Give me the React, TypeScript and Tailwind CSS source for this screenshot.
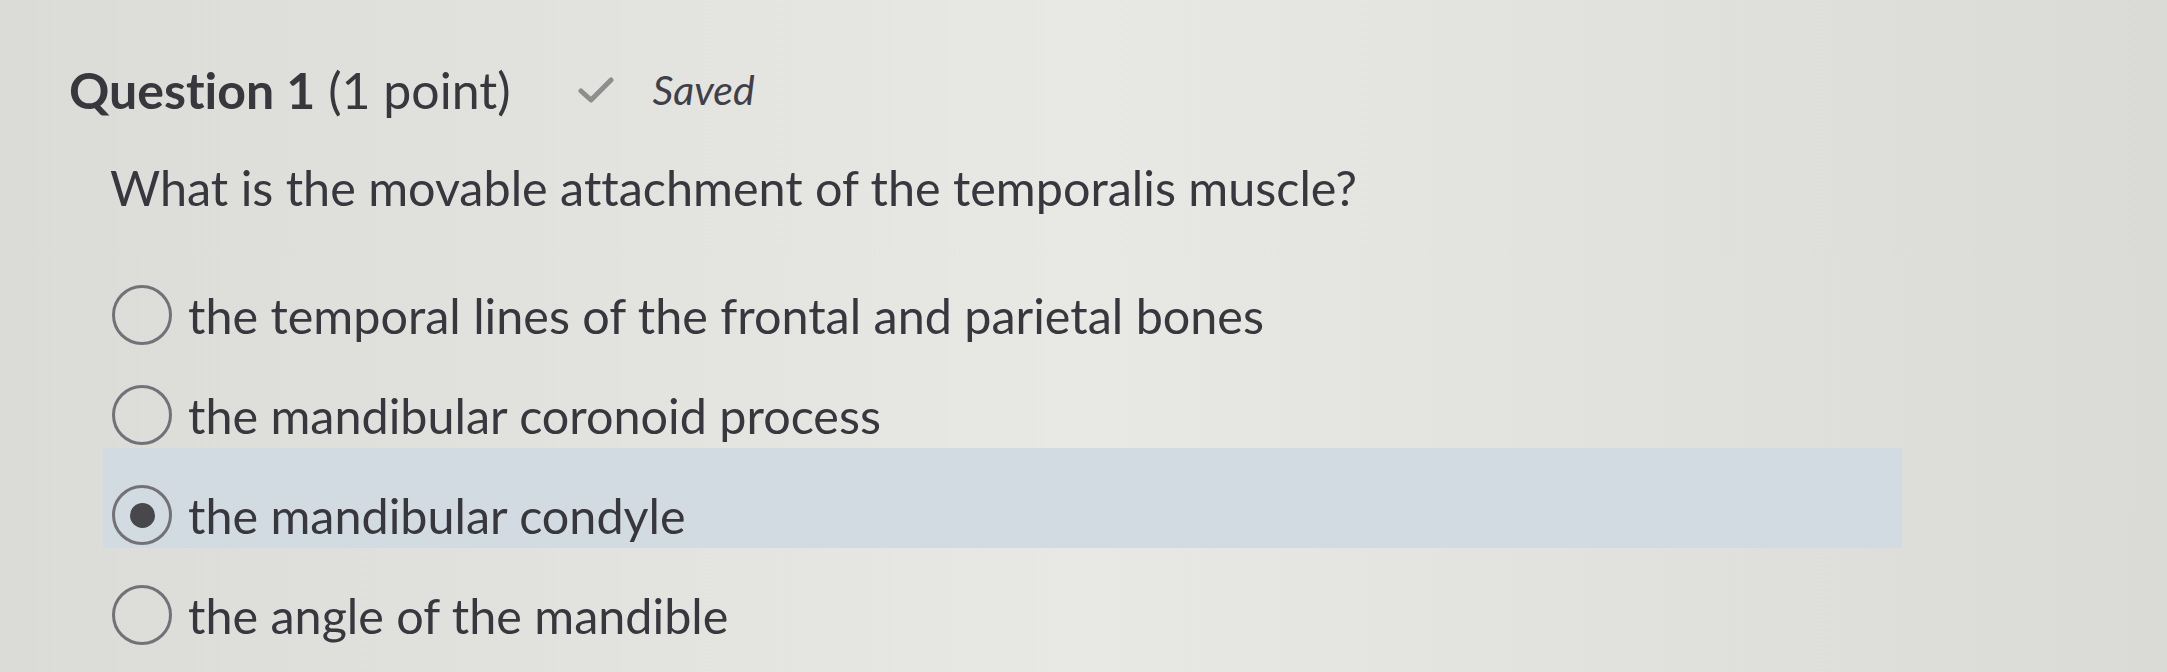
const options = [
  "the temporal lines of the frontal and parietal bones",
  "the mandibular coronoid process",
  "the mandibular condyle",
  "the angle of the mandible",
];

const selected = 2;

function Radio({ checked }: { checked: boolean }) {
  return (
    <span className="flex h-[60px] w-[60px] shrink-0 items-center justify-center rounded-full border-[3px] border-[#727177]">
      {checked && <span className="h-[25px] w-[25px] rounded-full bg-[#48474c]" />}
    </span>
  );
}

export default function App() {
  return (
    <div
      className="h-[672px] w-[2167px] overflow-hidden bg-linear-to-r from-[#dbdbd8] via-[#e8e8e5] to-[#dadad7] text-[#38373e] [font-variant-ligatures:none]"
      style={{ fontFamily: "Lato, 'Noto Sans', sans-serif" }}
    >
      {/* header */}
      <div className="flex items-center pl-[69px] pt-[60px] leading-[60px]">
        <h2 className="text-[50px]">
          <span className="font-bold">Question 1</span> (1 point)
        </h2>
        <div className="ml-[68px] flex items-center">
          <svg width="36" height="26" viewBox="0 0 36 26" fill="none">
            <path d="M3 14 L13 23 L33 3" stroke="#8e8e8e" strokeWidth="5" strokeLinecap="round" strokeLinejoin="round" />
          </svg>
          <span className="ml-[38px] text-[41px] italic text-[#403f47]">Saved</span>
        </div>
      </div>

      {/* question */}
      <p className="mt-[37px] pl-[110px] text-[48.5px] leading-[60px]">
        What is the movable attachment of the temporalis muscle?
      </p>

      {/* choices */}
      <div className="ml-[103px] mt-[31px] flex w-[1799px] flex-col">
        {options.map((opt, i) => (
          <label
            key={opt}
            className={
              "flex h-[100px] items-center gap-[16px] pl-[9px] pt-[34px] " +
              (i === selected ? "bg-[#d2dbe2]" : "")
            }
          >
            <Radio checked={i === selected} />
            <span className="text-[48.5px] leading-[60px]">{opt}</span>
          </label>
        ))}
      </div>
    </div>
  );
}
